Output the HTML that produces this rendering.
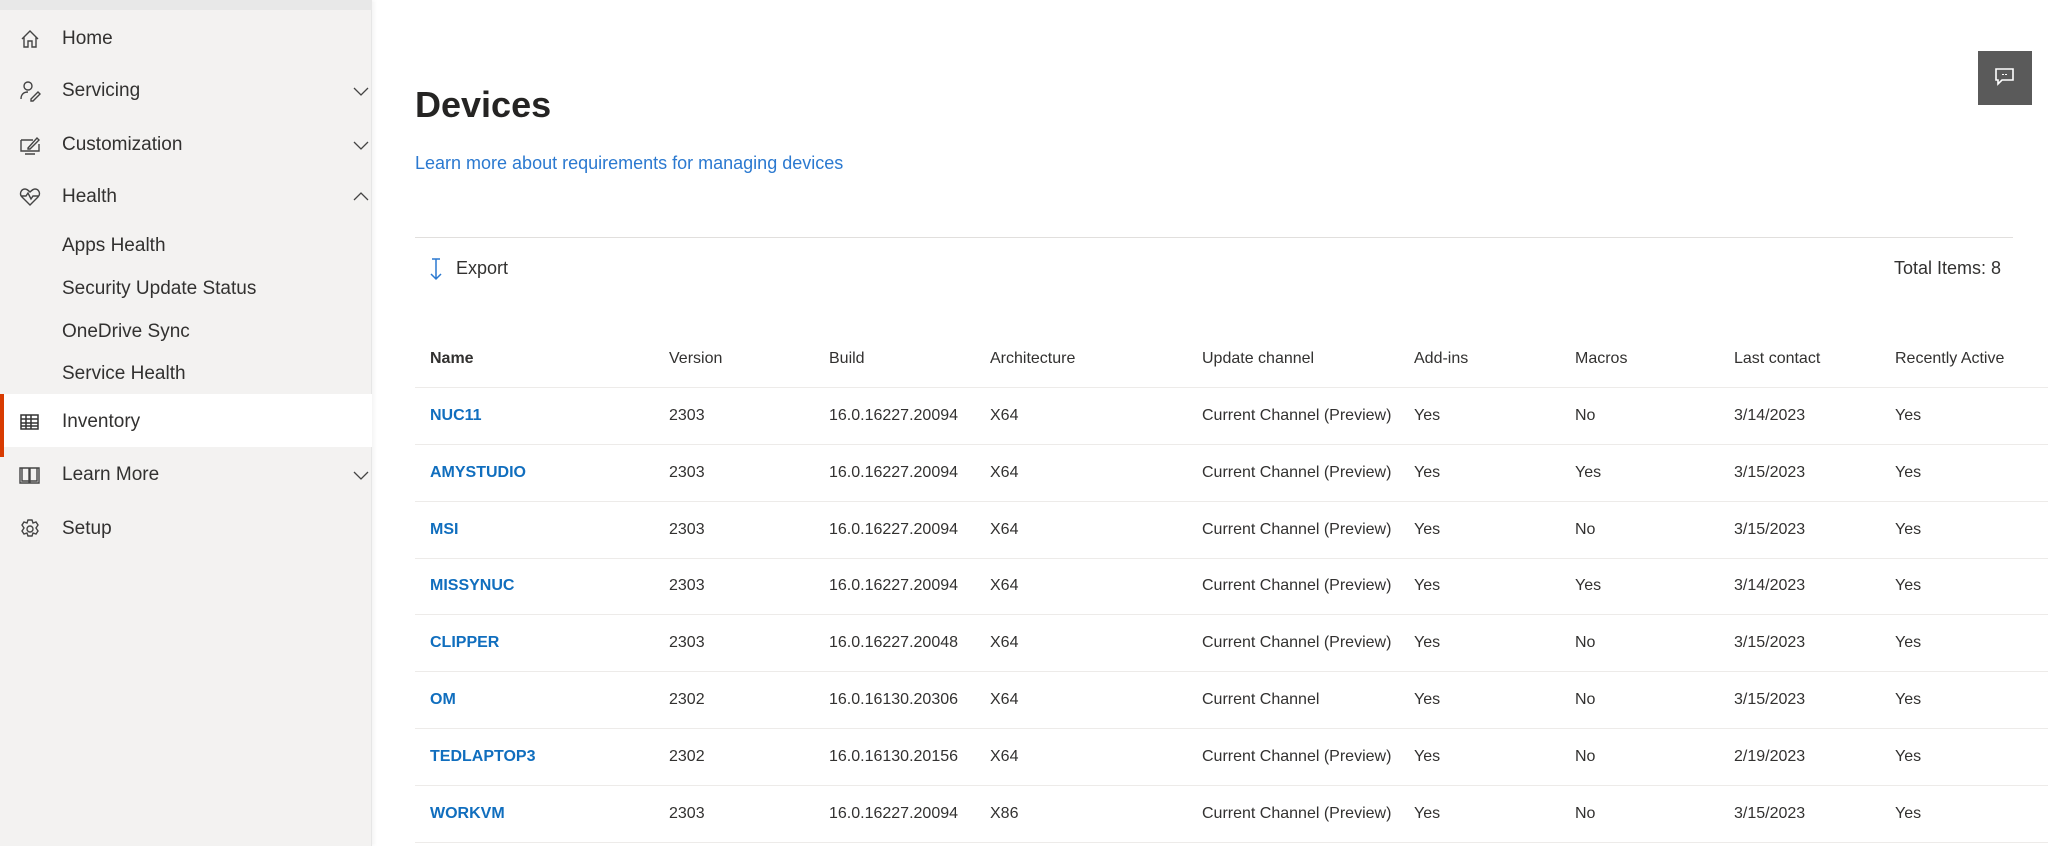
<!DOCTYPE html>
<html><head><meta charset="utf-8"><style>
*{margin:0;padding:0;box-sizing:border-box}
body{width:2048px;height:846px;overflow:hidden;background:#fff;font-family:"Liberation Sans",sans-serif;color:#323130;position:relative}
.side{position:absolute;left:0;top:0;width:372px;height:846px;background:#f3f2f1;border-right:1px solid #e6e6e6;box-shadow:2px 0 4px rgba(0,0,0,.05)}
.topband{position:absolute;left:0;top:0;width:372px;height:10px;background:#e8e8e8}
.it{position:absolute;left:0;width:372px;font-size:19px;color:#323130}
.it span{position:absolute;left:62px;transform:translateY(-50%)}
.it svg.ic{position:absolute;left:19px;transform:translateY(-50%)}
.it svg.ch{position:absolute;left:352px;transform:translateY(-50%)}
.sel{position:absolute;left:0;top:394px;width:372px;height:53px;background:#fff}
.bar{position:absolute;left:0;top:394px;width:4px;height:63px;background:#d83b01}
h1{position:absolute;left:415px;top:84px;font-size:36px;font-weight:bold;color:#252423}
.link{position:absolute;left:415px;top:153px;font-size:18px;color:#2b79d0}
.div{position:absolute;left:415px;top:237px;width:1598px;height:1px;background:#e1dfdd}
.exp{position:absolute;left:456px;top:258px;font-size:18px}
.tot{position:absolute;right:47px;top:258px;font-size:18px}
.fb{position:absolute;left:1978px;top:51px;width:54px;height:54px;background:#5a5a5a}
.row{position:absolute;left:415px;width:1633px;border-bottom:1px solid #edebe9;height:57px}
.c{position:absolute;top:50%;transform:translateY(-50%);font-size:16px;white-space:nowrap}
.n{color:#106ebe;font-weight:bold}
</style></head><body>
<div class="side">
<div class="topband"></div>
<div class="sel"></div><div class="bar"></div>
<div class="it" style="top:39px"><svg class="ic" width="22" height="22" viewBox="0 0 22 22" fill="none" stroke="#444" stroke-width="1.4"><path d="M3 11 11 3l8 8M5 9v10h4v-6h4v6h4V9"/></svg><span>Home</span></div>
<div class="it" style="top:91px"><svg class="ic" width="22" height="22" viewBox="0 0 22 22" fill="none" stroke="#444" stroke-width="1.4"><circle cx="9" cy="6" r="4"/><path d="M2 19c0-5 3-7 7-7M12 19l7-7 2 2-7 7h-2z"/></svg><span>Servicing</span><svg class="ch" width="18" height="18" viewBox="0 0 18 18" fill="none" stroke="#444" stroke-width="1.3"><path d="M2 6l7 7 7-7"/></svg></div>
<div class="it" style="top:145px"><svg class="ic" width="22" height="22" viewBox="0 0 22 22" fill="none" stroke="#444" stroke-width="1.4"><path d="M2 6h12M2 6v11h18v-7M6 20h10M9 14l9-10 2 2-9 9h-2z"/></svg><span>Customization</span><svg class="ch" width="18" height="18" viewBox="0 0 18 18" fill="none" stroke="#444" stroke-width="1.3"><path d="M2 6l7 7 7-7"/></svg></div>
<div class="it" style="top:197px"><svg class="ic" width="22" height="22" viewBox="0 0 22 22" fill="none" stroke="#444" stroke-width="1.4"><path d="M11 19 3 11C0 8 2 3 6 3c2 0 4 2 5 3 1-1 3-3 5-3 4 0 6 5 3 8zM2 10h5l2-3 3 6 2-3h6"/></svg><span>Health</span><svg class="ch" width="18" height="18" viewBox="0 0 18 18" fill="none" stroke="#444" stroke-width="1.3"><path d="M2 12l7-7 7 7"/></svg></div>
<div class="it" style="top:246px"><span>Apps Health</span></div>
<div class="it" style="top:289px"><span>Security Update Status</span></div>
<div class="it" style="top:332px"><span>OneDrive Sync</span></div>
<div class="it" style="top:374px"><span>Service Health</span></div>
<div class="it" style="top:422px"><svg class="ic" width="22" height="22" viewBox="0 0 22 22" fill="none" stroke="#333" stroke-width="1.5"><rect x="2" y="4" width="17" height="14"/><path d="M2 8h17M2 12h17M2 15h17M7 4v14M12 4v14"/></svg><span>Inventory</span></div>
<div class="it" style="top:475px"><svg class="ic" width="22" height="22" viewBox="0 0 22 22" fill="none" stroke="#444" stroke-width="1.4"><path d="M1 4h9v15H1zM11 4h9v15h-9zM3 4v13h7M18 4v13h-7"/></svg><span>Learn More</span><svg class="ch" width="18" height="18" viewBox="0 0 18 18" fill="none" stroke="#444" stroke-width="1.3"><path d="M2 6l7 7 7-7"/></svg></div>
<div class="it" style="top:529px"><svg class="ic" width="22" height="22" viewBox="0 0 22 22" fill="none" stroke="#444" stroke-width="1.4"><circle cx="11" cy="11" r="3"/><path d="M9 2h4l1 3 3-1 2 3-2 3 2 3-2 3-3-1-1 3H9l-1-3-3 1-2-3 2-3-2-3 2-3 3 1z"/></svg><span>Setup</span></div>
</div>
<h1>Devices</h1>
<div class="link">Learn more about requirements for managing devices</div>
<div class="div"></div>
<svg style="position:absolute;left:428px;top:257px" width="16" height="26" viewBox="0 0 16 26" fill="none" stroke="#2b79d0" stroke-width="1.5"><path d="M4 2h8M8 2v20M3 17l5 5 5-5"/></svg>
<div class="exp">Export</div>
<div class="tot">Total Items: 8</div>
<div class="fb"><svg style="position:absolute;left:17px;top:17px" width="20" height="18" viewBox="0 0 20 18" fill="none" stroke="#fff" stroke-width="1.6"><path d="M1 1h17v11H7l-4 4v-4H1z"/><path d="M8 6v1M11 6v1" stroke-width="2"/></svg></div>
<div id="t"></div>
<script>
var X=[15,254,414,575,787,999,1160,1319,1480];
var H=["Name","Version","Build","Architecture","Update channel","Add-ins","Macros","Last contact","Recently Active"];
var R=[["NUC11","2303","16.0.16227.20094","X64","Current Channel (Preview)","Yes","No","3/14/2023","Yes"],
["AMYSTUDIO","2303","16.0.16227.20094","X64","Current Channel (Preview)","Yes","Yes","3/15/2023","Yes"],
["MSI","2303","16.0.16227.20094","X64","Current Channel (Preview)","Yes","No","3/15/2023","Yes"],
["MISSYNUC","2303","16.0.16227.20094","X64","Current Channel (Preview)","Yes","Yes","3/14/2023","Yes"],
["CLIPPER","2303","16.0.16227.20048","X64","Current Channel (Preview)","Yes","No","3/15/2023","Yes"],
["OM","2302","16.0.16130.20306","X64","Current Channel","Yes","No","3/15/2023","Yes"],
["TEDLAPTOP3","2302","16.0.16130.20156","X64","Current Channel (Preview)","Yes","No","2/19/2023","Yes"],
["WORKVM","2303","16.0.16227.20094","X86","Current Channel (Preview)","Yes","No","3/15/2023","Yes"]];
var s='<div class="row h" style="top:331px">';
H.forEach(function(h,i){s+='<div class="c" style="left:'+X[i]+'px'+(i==0?';font-weight:bold':'')+'">'+h+'</div>'});
s+='</div>';
R.forEach(function(r,j){s+='<div class="row" style="top:'+(388+j*56.8)+'px">';
r.forEach(function(v,i){s+='<div class="c'+(i==0?' n':'')+'" style="left:'+X[i]+'px">'+v+'</div>'});s+='</div>'});
document.getElementById('t').innerHTML=s;
</script>
</body></html>
